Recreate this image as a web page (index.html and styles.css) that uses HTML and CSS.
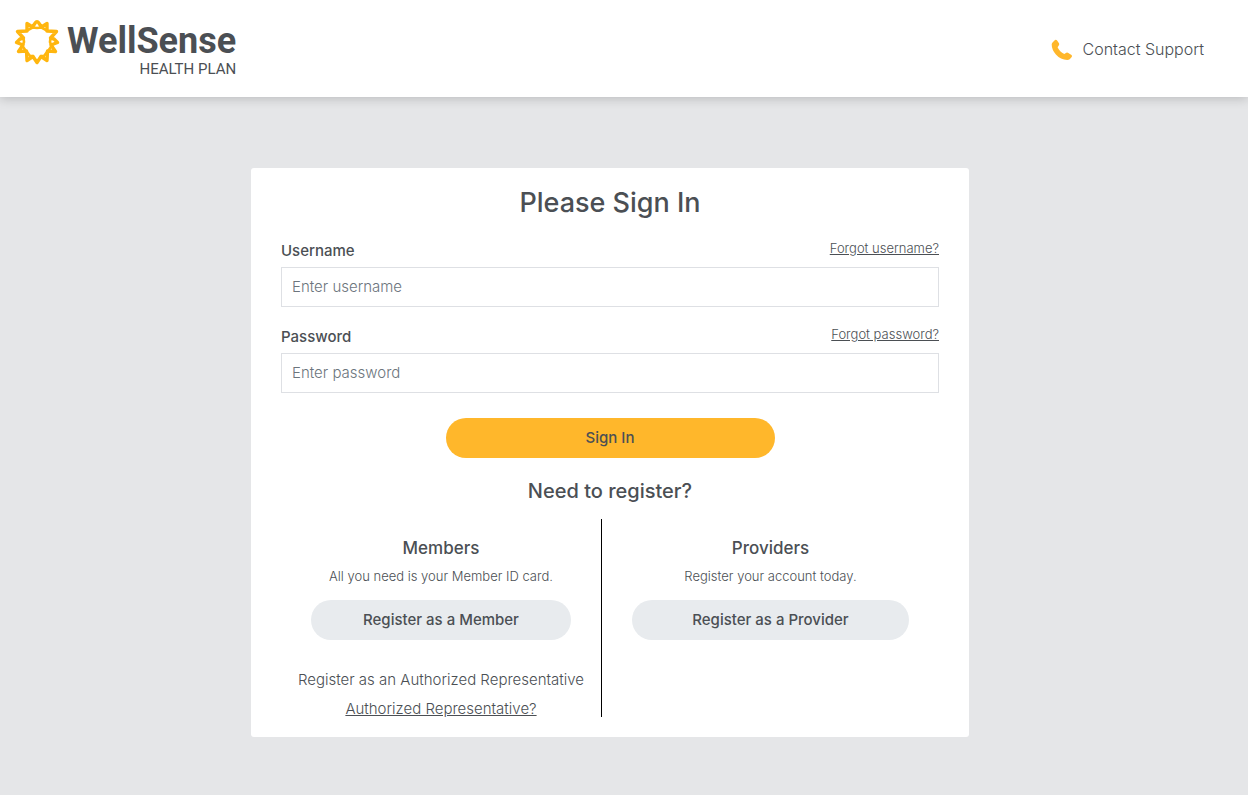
FILE: index.html
```
<!DOCTYPE html>
<html lang="en">
<head>
  <meta charset="UTF-8" />
  <meta name="viewport" content="width=device-width, initial-scale=1" />
  <title>WellSense Health Plan - Sign In</title>
  <link rel="stylesheet" href="styles.css">
</head>
<body>
  <header class="header">
    <a class="logo" href="#">
      <svg class="logo-sun" viewBox="-23 -23 46 46" aria-hidden="true">
        <g fill="none" stroke="#ffb60f" stroke-linejoin="round" stroke-linecap="round">
          <!-- outer rays -->
          <path stroke-width="3.400" d="M-4.500 -15 L-1.800 -19 Q0 -21.800 1.800 -19 L4.500 -15 L10 -18.500 L10 -11 L19.500 -10.500 L13.500 -4 L17 -3 L20.500 .5 L14 3 L18.500 9.500 L10.500 9 L10 18.500 L4 14.500 L0 20.500 L-4 14.500 L-10 18.500 L-10.500 9 L-18.500 9.500 L-14 3 L-20.500 .5 L-17 -3 L-13.500 -4 L-19.500 -10.500 L-10 -11 L-10 -18.500 L-4.500 -15 Z" />
          <!-- inner crossings -->
          <path stroke-width="2.600" d="M-4.500 -14.500 L0 -14 L4.500 -14.500 L10 -11.500 M13.500 -4 L13 0 L14.500 4 L10.500 10 M-13.500 -4 L-13 0 L-14.500 4 L-10.500 10 M-4.500 -14.500 L-10 -11.500 M10 10 L7 14 L4 14 M-10 10 L-7 14 L-4 14" />
        </g>
      </svg>
      <span class="logo-text">
        <span class="logo-name">WellSense</span>
        <span class="logo-sub">HEALTH PLAN</span>
      </span>
    </a>
    <a class="support" href="#">
      <svg class="phone" viewBox="0 0 22 22" aria-hidden="true">
        <path d="M1.5 3.4 L4 1 Q5 .2 5.900 1.200 L8 4.300 Q8.600 5.300 7.900 6.300 L6.600 8.200 Q8.600 12.800 13.300 15 L15.300 13.800 Q16.300 13.200 17.300 13.900 L20.500 16 Q21.500 16.800 20.700 18 L18.700 20.300 Q17.700 21 16.300 21 Q9.500 21 4.900 15.600 Q.7 10.600 .7 5.500 Q.7 4.200 1.500 3.400Z" fill="#ffb72b" />
      </svg>
      Contact Support
    </a>
  </header>

  <main class="main">
    <section class="card">
      <h1>Please Sign In</h1>

      <form>
        <div class="field">
          <div class="field-top">
            <label for="username">Username</label>
            <a href="#">Forgot username?</a>
          </div>
          <input type="text" id="username" placeholder="Enter username" />
        </div>
        <div class="field">
          <div class="field-top">
            <label for="password">Password</label>
            <a href="#">Forgot password?</a>
          </div>
          <input type="password" id="password" placeholder="Enter password" />
        </div>
        <button type="submit" class="btn btn-signin">Sign In</button>
      </form>

      <h2>Need to register?</h2>
      <div class="register">
        <div class="register-col">
          <h3>Members</h3>
          <p class="hint">All you need is your Member ID card.</p>
          <button type="button" class="btn btn-register">Register as a Member</button>
          <div class="representative">
            <p>Register as an Authorized Representative</p>
            <a href="#">Authorized Representative?</a>
          </div>
        </div>
        <div class="register-col">
          <h3>Providers</h3>
          <p class="hint">Register your account today.</p>
          <button type="button" class="btn btn-register">Register as a Provider</button>
        </div>
      </div>
    </section>
  </main>
</body>
</html>
```
FILE: styles.css
```
* {
  box-sizing: border-box;
}

body {
  margin: 0;
  min-height: 100vh;
  font-family: Inter, "Liberation Sans", sans-serif;
  font-size: 15px;
  font-weight: 300;
  line-height: 24px;
  color: #4b4f54;
  background: #e5e6e8;
}

h1, h2, h3, p {
  margin: 0;
}

h1, h2, h3 {
  font-weight: 500;
  text-align: center;
}

a {
  color: #4b4f54;
}

.header {
  display: flex;
  justify-content: space-between;
  align-items: center;
  height: 97px;
  padding: 0 44px 0 14px;
  background: #fff;
  box-shadow: 0 2px 10px rgba(0,0,0,0.18);
}

.logo {
  display: flex;
  gap: 7px;
  padding-bottom: 3px;
  text-decoration: none;
}

.logo-sun {
  width: 46px;
  height: 46px;
}

.logo-text {
  display: flex;
  flex-direction: column;
  font-family: Roboto, "Liberation Sans", sans-serif;
}

.logo-name {
  font-size: 36px;
  font-weight: 700;
  line-height: 44px;
}

.logo-sub {
  font-size: 15px;
  font-weight: 400;
  line-height: 12px;
  text-align: right;
}

.support {
  display: flex;
  align-items: center;
  gap: 10px;
  font-size: 16px;
  text-decoration: none;
}

.phone {
  width: 22px;
  height: 22px;
  margin-top: 2px;
}

.main {
  display: flex;
  justify-content: center;
  padding: 71px 28px 58px 0;
}

.card {
  width: 100%;
  max-width: 718px;
  padding: 17px 30px 20px;
  background: #fff;
  border-radius: 3px;
}

h1 {
  font-size: 27px;
  line-height: 36px;
  margin-bottom: 15px;
}

.field {
  margin-bottom: 15px;
}

.field-top {
  display: flex;
  justify-content: space-between;
  height: 31px;
}

.field-top label {
  font-weight: 500;
  line-height: 30px;
}

.field-top a {
  font-size: 13px;
}

input {
  display: block;
  width: 100%;
  height: 40px;
  padding: 0 10px 2px;
  border: 1px solid #dee0e4;
  background: #fff;
  font: inherit;
  color: #4b4f54;
}

input::placeholder {
  color: #6c757d;
  opacity: 1;
}

.btn {
  display: block;
  height: 40px;
  padding: 0 12px;
  border: none;
  border-radius: 20px;
  font: inherit;
  font-weight: 500;
  color: #4b4f54;
  cursor: pointer;
}

.btn-signin {
  width: 50%;
  margin: 25px auto 0;
  background: #ffb72b;
}

.btn-register {
  width: calc(100% - 30px);
  margin: 12px auto 0;
  background: #e8ebee;
}

h2 {
  margin: 18px 0 13px;
  font-size: 20px;
  line-height: 30px;
}

.register {
  display: grid;
  grid-template-columns: 20fr 21fr;
}

.register-col {
  padding: 17px 15px 0;
  text-align: center;
}

.register-col:first-child {
  border-right: 1px solid #000;
}

h3 {
  font-size: 17px;
  line-height: 24px;
}

.hint {
  margin-top: 4px;
  font-size: 13px;
}

.representative {
  margin-top: 28px;
}

.representative p {
  margin-bottom: 9px;
}

.representative a {
  display: block;
  line-height: 16px;
}
```
